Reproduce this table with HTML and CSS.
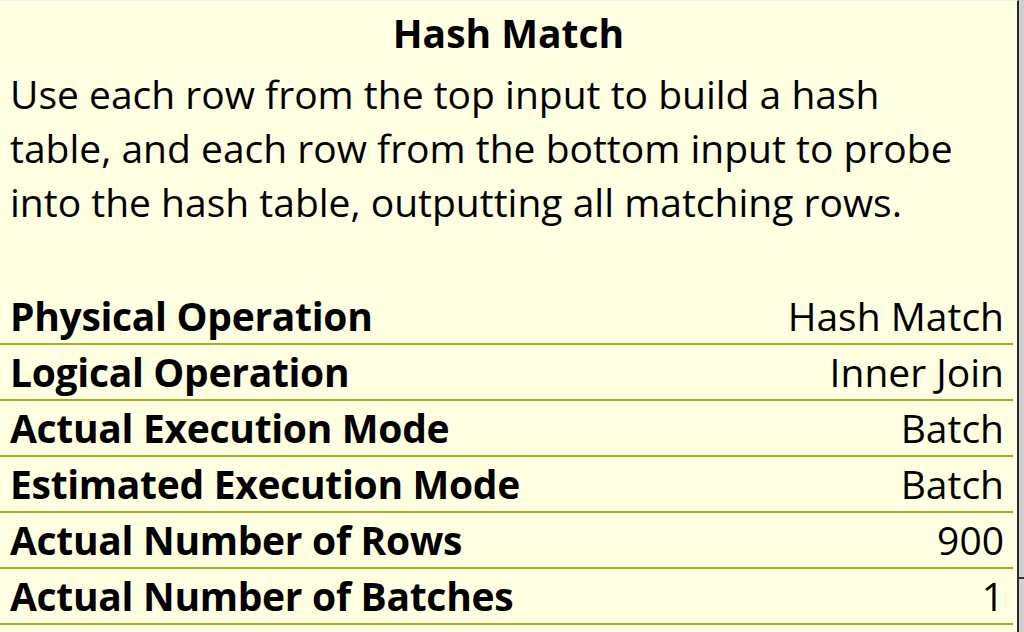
FILE: index.html
```html
<!DOCTYPE html>
<html>
<head>
<meta charset="utf-8">
<link rel="stylesheet" href="styles.css">
</head>
<body>
<div class="page">
  <div class="tip">
    <div class="title">Hash Match</div>
    <p class="desc">Use each row from the top input to build a hash<br>table, and each row from the bottom input to probe<br>into the hash table, outputting all matching rows.</p>
    <table class="props">
      <tr><th>Physical Operation</th><td>Hash Match</td></tr>
      <tr><th>Logical Operation</th><td>Inner Join</td></tr>
      <tr><th>Actual Execution Mode</th><td>Batch</td></tr>
      <tr><th>Estimated Execution Mode</th><td>Batch</td></tr>
      <tr><th>Actual Number of Rows</th><td>900</td></tr>
      <tr><th>Actual Number of Batches</th><td>1</td></tr>
    </table>
  </div>
  <div class="edge"><div class="edge-line"></div></div>
</div>
</body>
</html>
```

FILE: styles.css
```css
html, body {
  margin: 0;
  padding: 0;
  background: #ffffe1;
}
.page {
  display: flex;
  width: 1024px;
  height: 632px;
  overflow: hidden;
}
.tip {
  flex: 0 0 1019px;
  box-sizing: border-box;
  background: #ffffe1;
  border-top: 1px solid #f2f2ee;
  border-right: 2px solid #2a2a2a;
  font-family: "Open Sans", "Noto Sans", sans-serif;
  font-size: 39px;
  color: #000;
}
.title {
  font-weight: bold;
  text-align: center;
  line-height: 54px;
  padding-top: 5px;
}
.desc {
  margin: 7px 0 0 0;
  padding-left: 10px;
  line-height: 54px;
}
.props {
  margin-top: 60px;
  width: 1013px;
  border-collapse: collapse;
}
.props th, .props td {
  height: 54px;
  padding: 0;
  line-height: 54px;
  border-bottom: 2px solid #abab26;
  white-space: nowrap;
}
.props th {
  text-align: left;
  padding-left: 10px;
  font-weight: bold;
  letter-spacing: -0.3px;
}
.props td {
  text-align: right;
  padding-right: 9px;
}
.edge {
  flex: 1;
  background: #cfcfcf;
  display: flex;
  flex-direction: column;
  padding-top: 577px;
}
.edge-line {
  height: 2px;
  background: #333;
}
```
